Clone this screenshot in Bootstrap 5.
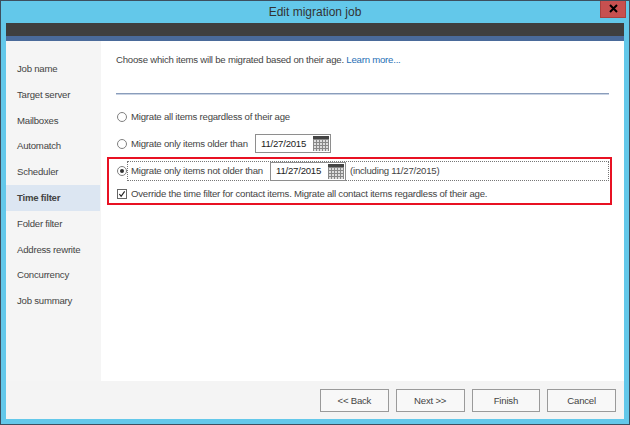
<!DOCTYPE html>
<html lang="en">
<head>
<meta charset="utf-8">
<title>Edit migration job</title>
<link rel="stylesheet" href="https://cdn.jsdelivr.net/npm/bootstrap@5.3.0/dist/css/bootstrap.min.css">
<style>
html,body{margin:0;padding:0;background:#63c8ea}
body{width:630px;height:425px;overflow:hidden;font-family:"Liberation Sans",Arial,sans-serif;font-size:9.6px;letter-spacing:-.22px;color:#444;line-height:12px}
.win{width:630px;height:425px;border:1px solid #3d4f5f;background:#63c8ea}
.titlebar{height:22px;position:relative;font-size:12px;letter-spacing:0;color:#333;line-height:22px}
.closebtn{position:absolute;right:3px;top:0;width:26px;height:17px;background:#c75050;border:1px solid #a8413f;border-top:0}
.closebtn svg{position:absolute;left:8px;top:3px}
.client{margin:0 5px;height:396px;background:#fff}
.bar-dark{height:13px;background:#3f3f3f}
.bar-blue{height:5px;background:#4a6a9a}
.mainrow{height:340px}
.side{width:95px;flex:none;background:#f5f5f5;padding-top:15px}
.side-item{height:25.8px;line-height:26.5px;padding-left:11px;color:#444;width:94px}
.side-item.on{background:#dce6f2;font-weight:700}
.pane{flex:1;min-width:0;padding:13px 15px 0 15px}
.rule{height:2px;background:linear-gradient(#8a9dbb 50%,#c9d3e3 50%);margin-top:27px;width:493px}
.lnk{color:#1f6fb5}
.opt{height:20px;margin-top:12px}
.opt-date{height:19px;margin-top:7px}
.radio{width:10px;height:10px;border:1px solid #808080;border-radius:50%;background:#fff;flex:none;margin-left:1px;margin-right:4px;position:relative}
.radio.sel::after{content:"";position:absolute;left:2px;top:2px;width:4px;height:4px;border-radius:50%;background:#333}
.lbl-a{width:124px;flex:none}
.lbl-b{width:139px;flex:none}
.datebox{width:76px;height:19px;border:1px solid #8e8e8e;background:#fff;padding-left:5px;color:#222;flex:none}
.datebox svg{flex:none;margin-right:1px}
.hl{width:505px;margin-left:-9px;margin-top:4px;height:48px;border:2px solid #e81123;padding:2px 1px 0 7px}
.dots{border:1px dotted #777;height:20px;padding-left:3px;flex:1}
.chkrow{margin-top:7px;margin-left:1px}
.chk{width:10px;height:10px;border:1px solid #666;background:#fff;flex:none;margin-right:4px}
.foot{height:38px;background:#f4f4f4;padding-right:8px;gap:7px}
.wbtn{width:68.75px;height:23px;border:1px solid #9a9a9a;background:#f8f8f8;color:#444;font-size:9.6px;letter-spacing:-.22px;line-height:21px;text-align:center;padding:0;border-radius:0}
</style>
</head>
<body>
<div class="win">
  <div class="titlebar text-center">Edit migration job
    <div class="closebtn"><svg width="9" height="9" viewBox="0 0 9 9"><path d="M1 1L8 8M8 1L1 8" stroke="#000" stroke-width="2"/></svg></div>
  </div>
  <div class="client d-flex flex-column">
    <div class="bar-dark"></div>
    <div class="bar-blue"></div>
    <div class="mainrow d-flex">
      <div class="side">
        <div class="side-item">Job name</div>
        <div class="side-item">Target server</div>
        <div class="side-item">Mailboxes</div>
        <div class="side-item">Automatch</div>
        <div class="side-item">Scheduler</div>
        <div class="side-item on">Time filter</div>
        <div class="side-item">Folder filter</div>
        <div class="side-item">Address rewrite</div>
        <div class="side-item">Concurrency</div>
        <div class="side-item">Job summary</div>
      </div>
      <div class="pane">
        <div>Choose which items will be migrated based on their age. <span class="lnk">Learn more...</span></div>
        <div class="rule"></div>
        <div class="opt d-flex align-items-center"><span class="radio"></span>Migrate all items regardless of their age</div>
        <div class="opt-date d-flex align-items-center"><span class="radio"></span><span class="lbl-a">Migrate only items older than</span>
          <span class="datebox d-flex align-items-center justify-content-between">11/27/2015<svg width="16" height="15" viewBox="0 0 16 15"><rect width="16" height="15" fill="#ddd"/><rect width="16" height="3" fill="#444"/><path d="M0 3.5H16M0 6.5H16M0 9.5H16M0 12.5H16M0.5 3V15M3.5 3V15M6.5 3V15M9.5 3V15M12.5 3V15M15.5 3V15" stroke="#888"/></svg></span></div>
        <div class="hl">
          <div class="d-flex align-items-center">
            <span class="radio sel me-0"></span>
            <div class="dots d-flex align-items-center"><span class="lbl-b">Migrate only items not older than</span>
              <span class="datebox d-flex align-items-center justify-content-between">11/27/2015<svg width="16" height="15" viewBox="0 0 16 15"><rect width="16" height="15" fill="#ddd"/><rect width="16" height="3" fill="#444"/><path d="M0 3.5H16M0 6.5H16M0 9.5H16M0 12.5H16M0.5 3V15M3.5 3V15M6.5 3V15M9.5 3V15M12.5 3V15M15.5 3V15" stroke="#888"/></svg></span>
              <span class="ms-1">(including 11/27/2015)</span></div>
          </div>
          <div class="chkrow d-flex align-items-center"><span class="chk d-flex"><svg width="8" height="8" viewBox="0 0 9 9"><path d="M1.5 4.5L3.5 7L7.5 1.5" fill="none" stroke="#222" stroke-width="1.3"/></svg></span>Override the time filter for contact items. Migrate all contact items regardless of their age.</div>
        </div>
      </div>
    </div>
    <div class="foot d-flex justify-content-end align-items-center">
      <button class="wbtn">&lt;&lt; Back</button>
      <button class="wbtn">Next &gt;&gt;</button>
      <button class="wbtn">Finish</button>
      <button class="wbtn">Cancel</button>
    </div>
  </div>
</div>
</body>
</html>
